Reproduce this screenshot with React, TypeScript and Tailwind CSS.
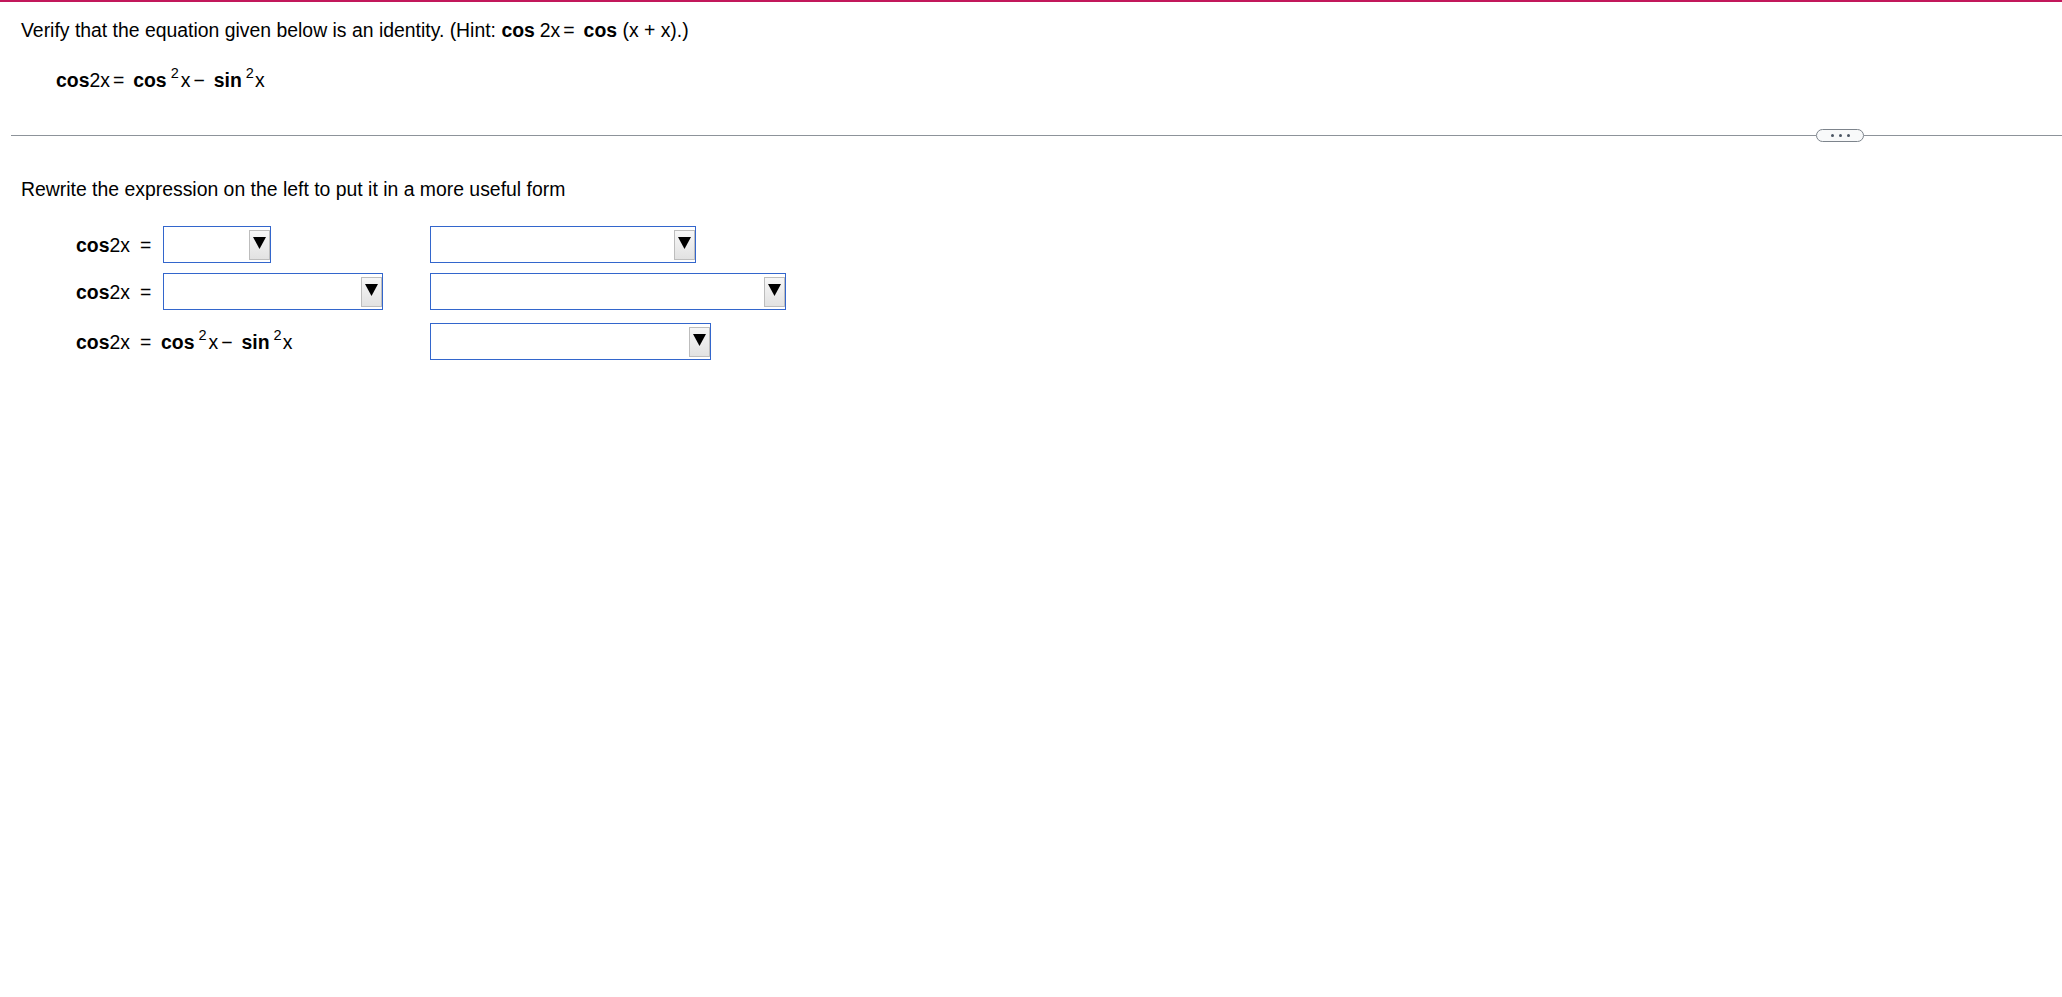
import React from "react";

function Sel({ w }: { w: string }) {
  return (
    <div className={`${w} h-[37px] border border-[#3366cc] bg-white flex justify-end items-start`}>
      <div className="mt-[3px] h-[30px] w-[21px] border border-[#bdbdbd] bg-gradient-to-b from-[#f7f7f7] to-[#e2e2e2] flex justify-center pt-[6px]">
        <svg width="13" height="12" viewBox="0 0 13 12">
          <polygon points="0,0 13,0 6.5,12" fill="#000" />
        </svg>
      </div>
    </div>
  );
}

function Sup({ children }: { children: React.ReactNode }) {
  return <span className="text-[14.5px] leading-[0] [vertical-align:9px] ml-[4px]">{children}</span>;
}

function Identity() {
  return (
    <span className="whitespace-nowrap">
      <b>cos</b>
      <Sup>2</Sup>
      <span className="ml-[2px]">x</span>
      <span className="ml-[3px] mr-[9px]">−</span>
      <b>sin</b>
      <Sup>2</Sup>
      <span className="ml-[1px]">x</span>
    </span>
  );
}

function Label() {
  return (
    <span className="whitespace-nowrap">
      <b>cos</b>2x<span className="ml-[10px]">=</span>
    </span>
  );
}

export default function App() {
  return (
    <div className="w-full min-h-screen bg-white text-black font-['Liberation_Sans',Arial,sans-serif] text-[19.4px] leading-[22px]">
      <div className="h-[2px] bg-[#c2185b]" />
      <div className="pl-[21px] pt-[17px] whitespace-nowrap">
        Verify that the equation given below is an identity. (Hint: <b>cos</b>
        <span className="ml-[5px]">2x</span>
        <span className="ml-[3px] mr-[9px]">=</span>
        <b>cos</b> (x + x).)
      </div>
      <div className="pl-[56px] mt-[28px] whitespace-nowrap">
        <b>cos</b>2x<span className="ml-[3px] mr-[9px]">=</span>
        <Identity />
      </div>
      <div className="mt-[38px] h-[13px] pl-[11px] flex items-center">
        <div className="flex-1 h-px bg-[#8d939a]" />
        <div className="w-[48px] h-[13px] rounded-full border border-[#7d848c] bg-[#f8f9fa] flex items-center justify-center gap-[5px]">
          <span className="w-[3px] h-[3px] rounded-full bg-[#4b5563]" />
          <span className="w-[3px] h-[3px] rounded-full bg-[#4b5563]" />
          <span className="w-[3px] h-[3px] rounded-full bg-[#4b5563]" />
        </div>
        <div className="w-[198px] h-px bg-[#8d939a]" />
      </div>
      <div className="pl-[21px] mt-[36px] whitespace-nowrap">
        Rewrite the expression on the left to put it in a more useful form
      </div>
      <div className="mt-[26px] pl-[76px] flex flex-col">
        <div className="flex items-center h-[37px]">
          <div className="w-[87px]"><Label /></div>
          <div className="w-[267px]"><Sel w="w-[108px]" /></div>
          <Sel w="w-[266px]" />
        </div>
        <div className="flex items-center h-[37px] mt-[10px]">
          <div className="w-[87px]"><Label /></div>
          <div className="w-[267px]"><Sel w="w-[220px]" /></div>
          <Sel w="w-[356px]" />
        </div>
        <div className="flex items-center h-[37px] mt-[13px]">
          <div className="w-[85px]"><Label /></div>
          <div className="w-[269px]"><Identity /></div>
          <Sel w="w-[281px]" />
        </div>
      </div>
    </div>
  );
}
